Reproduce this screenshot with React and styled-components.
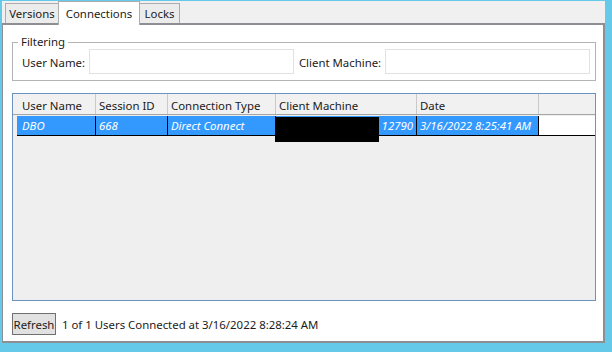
import React from "react";
import styled, { createGlobalStyle } from "styled-components";

const GlobalStyle = createGlobalStyle`
  html, body {
    margin: 0;
    padding: 0;
    background: #65c9ea;
  }
  body {
    font-family: "Noto Sans", "Open Sans", sans-serif;
    font-size: 11.4px;
    color: #1b1b1b;
  }
  * { box-sizing: border-box; }
`;

const Window = styled.div`
  margin: 1px 7px 9px 2px;
  height: 342px;
  display: flex;
  flex-direction: column;
`;

const TabStrip = styled.div`
  height: 22px;
  background: #f0f0f0;
  display: flex;
  align-items: flex-end;
  padding-left: 3px;
`;

const Tab = styled.div`
  position: relative;
  width: ${p => p.$w}px;
  margin-left: ${p => (p.$first ? 0 : -1)}px;
  text-align: center;
  line-height: 19px;
  border: 1px solid #acacac;
  border-bottom: none;
  background: ${p => (p.$active ? "#ffffff" : "#ececec")};
  height: ${p => (p.$active ? 24 : 20)}px;
  margin-bottom: ${p => (p.$active ? -2 : 0)}px;
  padding-top: ${p => (p.$active ? 2 : 0)}px;
  z-index: ${p => (p.$active ? 1 : 0)};
`;

const Panel = styled.div`
  flex: 1;
  display: flex;
  flex-direction: column;
  background: #ffffff;
  border: 2px solid #8e8f94;
  border-left-width: 1px;
  padding: 10px 7px 0 9px;
`;

const GroupBox = styled.fieldset`
  margin: 0;
  border: 1px solid #b3b3b3;
  padding: 0 5px 6px 9px;
  min-width: 0;
`;

const Legend = styled.legend`
  margin-left: -4px;
  padding: 0 3px;
  line-height: 14px;
`;

const FilterRow = styled.div`
  display: flex;
  align-items: center;
  height: 25px;
`;

const FilterLabel = styled.span`
  margin: 0 4px 0 ${p => p.$gap || 0}px;
  padding-top: 1px;
  white-space: nowrap;
`;

const TextBox = styled.div`
  flex: 1;
  height: 25px;
  border: 1px solid #e1e1e6;
  background: #ffffff;
`;

const Grid = styled.div`
  flex: 1;
  margin-top: 12px;
  border: 1px solid #6a93bd;
  background: #efefef;
  display: flex;
  flex-direction: column;
`;

const cols = "4px 79px 72px 108px 141px 122px 1fr";

const HeaderRow = styled.div`
  display: grid;
  grid-template-columns: ${cols};
  height: 21px;
  background: #f1f1f1;
  border-bottom: 1px solid #a5a5a5;
`;

const HeaderCell = styled.div`
  line-height: 15px;
  padding: 4px 0 0 ${p => (p.$first ? 5 : 3)}px;
  border-right: ${p => (p.$last ? "none" : "1px solid #c9c9c9")};
  white-space: nowrap;
  overflow: hidden;
`;

const DataRow = styled.div`
  display: grid;
  grid-template-columns: ${cols};
  height: 20px;
  margin-top: 1px;
`;

const Cell = styled.div`
  position: relative;
  line-height: 19px;
  font-style: italic;
  color: #ffffff;
  background: #3399ff;
  border-right: 1px solid #000000;
  border-bottom: 1px solid #000000;
  padding: 0 3px 0 ${p => (p.$first ? 5 : 3)}px;
  text-align: ${p => (p.$right ? "right" : "left")};
  white-space: nowrap;
`;

const FillerCell = styled.div`
  background: #ffffff;
  border-bottom: 1px solid #000000;
`;

const Redaction = styled.div`
  position: absolute;
  left: -1px;
  top: 1px;
  width: 104px;
  height: 25px;
  background: #000000;
  z-index: 2;
`;

const Footer = styled.div`
  display: flex;
  align-items: center;
  gap: 6px;
  margin: 12px 0 6px;
`;

const Button = styled.button`
  height: 22px;
  width: 44px;
  padding: 0;
  font: inherit;
  color: #1b1b1b;
  background: #e1e1e1;
  border: 1px solid #707070;
`;

export default function App() {
  return (
    <>
      <GlobalStyle />
      <Window>
        <TabStrip>
          <Tab $first $w={54}>Versions</Tab>
          <Tab $active $w={82}>Connections</Tab>
          <Tab $w={41}>Locks</Tab>
        </TabStrip>
        <Panel>
          <GroupBox>
            <Legend>Filtering</Legend>
            <FilterRow>
              <FilterLabel>User Name:</FilterLabel>
              <TextBox />
              <FilterLabel $gap={5}>Client Machine:</FilterLabel>
              <TextBox />
            </FilterRow>
          </GroupBox>
          <Grid>
            <HeaderRow>
              <div />
              <HeaderCell $first>User Name</HeaderCell>
              <HeaderCell>Session ID</HeaderCell>
              <HeaderCell>Connection Type</HeaderCell>
              <HeaderCell>Client Machine</HeaderCell>
              <HeaderCell>Date</HeaderCell>
              <HeaderCell $last />
            </HeaderRow>
            <DataRow>
              <div />
              <Cell $first>DBO</Cell>
              <Cell>668</Cell>
              <Cell>Direct Connect</Cell>
              <Cell $right>
                <Redaction />
                12790
              </Cell>
              <Cell>3/16/2022 8:25:41 AM</Cell>
              <FillerCell />
            </DataRow>
          </Grid>
          <Footer>
            <Button>Refresh</Button>
            <span>1 of 1 Users Connected at 3/16/2022 8:28:24 AM</span>
          </Footer>
        </Panel>
      </Window>
    </>
  );
}
